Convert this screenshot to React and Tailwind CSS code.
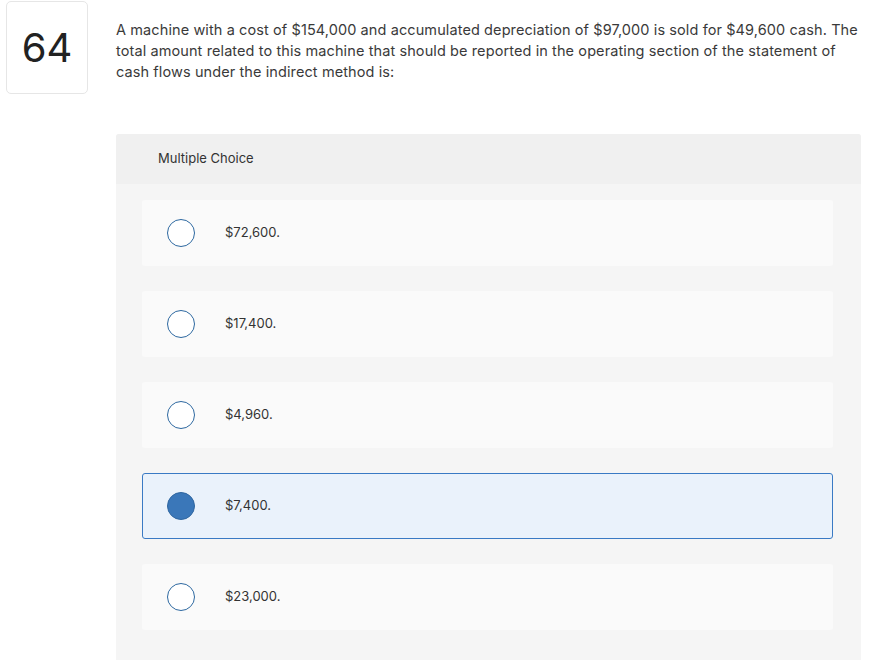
import React, { useState } from 'react';

const options = ['$72,600.', '$17,400.', '$4,960.', '$7,400.', '$23,000.'];

export default function App() {
  const [selected, setSelected] = useState(3);

  return (
    <div className="w-[878px] h-[660px] overflow-hidden bg-white text-[#333] font-['Inter',sans-serif]">
      {/* Question header */}
      <div className="flex">
        <div className="ml-[6px] mt-[1px] w-[82px] h-[93px] shrink-0 border border-[#e6e6e6] rounded-[5px] flex items-center justify-center text-[40px] text-[#222] leading-none">
          64
        </div>
        <p className="ml-[28px] mt-[19px] mr-[17px] text-[14.5px] tracking-[0.1px] leading-[21px] text-[#3a3a3a]">
          A machine with a cost of $154,000 and accumulated depreciation of $97,000 is sold for $49,600 cash. The total amount related to this machine that should be reported in the operating section of the statement of cash flows under the indirect method is:
        </p>
      </div>

      {/* Answer panel */}
      <div className="ml-[116px] mt-[40px] w-[745px] rounded-t-[3px] bg-[#f5f5f5] h-[530px]">
        <div className="h-[50px] bg-[#f0f0f0] rounded-t-[3px] flex items-center pl-[42px] text-[13px] text-[#333]">
          Multiple Choice
        </div>
        <div className="pt-[16px] pl-[26px] pr-[28px] flex flex-col gap-[25px]">
          {options.map((opt, i) => {
            const isSel = i === selected;
            return (
              <button
                key={opt}
                onClick={() => setSelected(i)}
                className={`h-[66px] w-full flex items-center text-left rounded-[3px] cursor-pointer ${
                  isSel ? 'bg-[#eaf2fb] border border-[#3a7ac4]' : 'bg-[#fafafa] border border-transparent'
                }`}
              >
                <span
                  className={`ml-[24px] w-[28px] h-[28px] rounded-full shrink-0 ${
                    isSel ? 'bg-[#3a77b9] border border-[#2f66a0]' : 'bg-white border-[1.5px] border-[#2d68a0]'
                  }`}
                />
                <span className="ml-[30px] text-[13px] text-[#333]">{opt}</span>
              </button>
            );
          })}
        </div>
      </div>
    </div>
  );
}
